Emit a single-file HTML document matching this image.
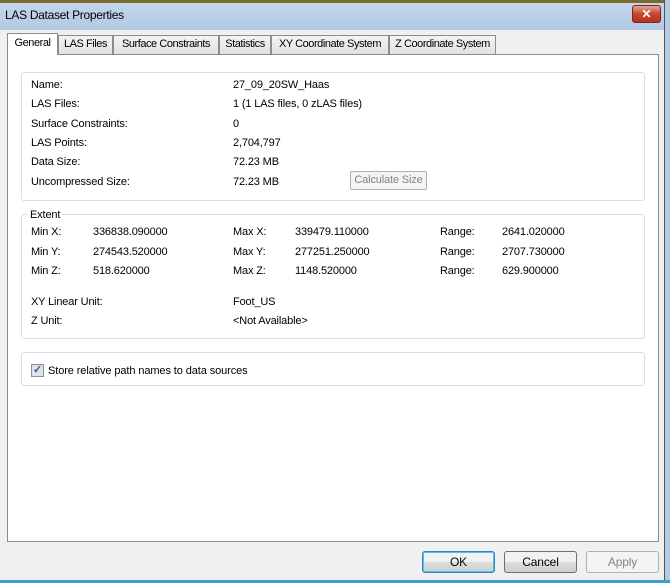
<!DOCTYPE html>
<html><head><style>
*{margin:0;padding:0;box-sizing:border-box}
body{width:670px;height:583px;position:relative;overflow:hidden;background:#f0f0f0;font-family:"Liberation Sans",sans-serif;font-size:11px;color:#000;letter-spacing:-0.15px}
.a{position:absolute;white-space:nowrap}
.tb{position:absolute;left:0;top:0;width:670px;height:30px;background:linear-gradient(#c4d7ec,#b3cae3)}
.tab{position:absolute;top:35px;height:19px;background:linear-gradient(#f4f4f4,#e2e2e2);border:1px solid #898c95;border-bottom:none;text-align:center;line-height:17px;font-size:11px;letter-spacing:-0.45px;overflow:hidden}
.panel{position:absolute;left:7px;top:54px;width:652px;height:488px;background:#fff;border:1px solid #898c95}
.grp{position:absolute;border:1px solid #d5dfe5;border-radius:3px}
.btn{position:absolute;top:551px;height:22px;width:73px;border:1px solid #707070;border-radius:3px;background:linear-gradient(#f2f2f2 50%,#dddddd 50%,#cfcfcf);text-align:center;line-height:20px;font-size:12px}
</style></head><body>
<div class="tb"></div>
<div class="a" style="left:0;top:0;width:670px;height:3px;background:#7a6a30"></div>
<div class="a" style="left:5px;top:8px;font-size:12px;letter-spacing:-0.3px">LAS Dataset Properties</div>
<div class="a" style="left:632px;top:5px;width:29px;height:18px;border:1px solid #6d2a20;border-radius:3px;background:linear-gradient(#e8a594,#c7452f 50%,#b8301a);color:#fff;font-weight:bold;text-align:center;line-height:16px;font-size:12px">✕</div>
<div class="a" style="left:664px;top:0;width:6px;height:583px;background:#b3cae3;border-left:1px solid #555"></div>
<div class="a" style="left:0;top:580px;width:670px;height:3px;background:#3aa0d0"></div>
<div class="tab" style="left:58px;width:55px">LAS Files</div>
<div class="tab" style="left:113px;width:106px">Surface Constraints</div>
<div class="tab" style="left:219px;width:52px">Statistics</div>
<div class="tab" style="left:271px;width:118px">XY Coordinate System</div>
<div class="tab" style="left:389px;width:107px">Z Coordinate System</div>
<div class="panel"></div>
<div class="tab" style="left:7px;top:33px;height:22px;width:51px;background:#fff;line-height:19px;z-index:2">General</div>
<div class="grp" style="left:21px;top:72px;width:624px;height:129px"></div>
<div class="a" style="left:31px;top:79px">Name:</div><div class="a" style="left:233px;top:79px">27_09_20SW_Haas</div>
<div class="a" style="left:31px;top:98px">LAS Files:</div><div class="a" style="left:233px;top:98px">1 (1 LAS files, 0 zLAS files)</div>
<div class="a" style="left:31px;top:118px">Surface Constraints:</div><div class="a" style="left:233px;top:118px">0</div>
<div class="a" style="left:31px;top:137px">LAS Points:</div><div class="a" style="left:233px;top:137px">2,704,797</div>
<div class="a" style="left:31px;top:156px">Data Size:</div><div class="a" style="left:233px;top:156px">72.23 MB</div>
<div class="a" style="left:31px;top:176px">Uncompressed Size:</div><div class="a" style="left:233px;top:176px">72.23 MB</div>
<div class="a" style="left:350px;top:171px;width:77px;height:19px;border:1px solid #adb2b5;border-radius:2px;background:#f4f4f4;color:#838383;text-align:center;line-height:17px">Calculate Size</div>
<div class="grp" style="left:21px;top:214px;width:624px;height:125px"></div>
<div class="a" style="left:28px;top:209px;background:#fff;padding:0 2px">Extent</div>
<div class="a" style="left:31px;top:226px">Min X:</div><div class="a" style="left:93px;top:226px">336838.090000</div>
<div class="a" style="left:233px;top:226px">Max X:</div><div class="a" style="left:295px;top:226px">339479.110000</div>
<div class="a" style="left:440px;top:226px">Range:</div><div class="a" style="left:502px;top:226px">2641.020000</div>
<div class="a" style="left:31px;top:246px">Min Y:</div><div class="a" style="left:93px;top:246px">274543.520000</div>
<div class="a" style="left:233px;top:246px">Max Y:</div><div class="a" style="left:295px;top:246px">277251.250000</div>
<div class="a" style="left:440px;top:246px">Range:</div><div class="a" style="left:502px;top:246px">2707.730000</div>
<div class="a" style="left:31px;top:265px">Min Z:</div><div class="a" style="left:93px;top:265px">518.620000</div>
<div class="a" style="left:233px;top:265px">Max Z:</div><div class="a" style="left:295px;top:265px">1148.520000</div>
<div class="a" style="left:440px;top:265px">Range:</div><div class="a" style="left:502px;top:265px">629.900000</div>
<div class="a" style="left:31px;top:296px">XY Linear Unit:</div><div class="a" style="left:233px;top:296px">Foot_US</div>
<div class="a" style="left:31px;top:315px">Z Unit:</div><div class="a" style="left:233px;top:315px">&lt;Not Available&gt;</div>
<div class="grp" style="left:21px;top:352px;width:624px;height:34px"></div>
<div class="a" style="left:31px;top:364px;width:13px;height:13px;border:1px solid #8e8f8f;background:#dfe3ea;color:#3a56a8;font-size:11px;line-height:11px;text-align:center;font-weight:bold">✓</div>
<div class="a" style="left:48px;top:365px;font-size:11px;letter-spacing:-0.1px">Store relative path names to data sources</div>
<div class="btn" style="left:422px;border-color:#3c7fb1;box-shadow:inset 0 0 0 1px #48c5f4">OK</div>
<div class="btn" style="left:504px">Cancel</div>
<div class="btn" style="left:586px;background:#f4f4f4;border-color:#adb2b5;color:#838383">Apply</div>
</body></html>
